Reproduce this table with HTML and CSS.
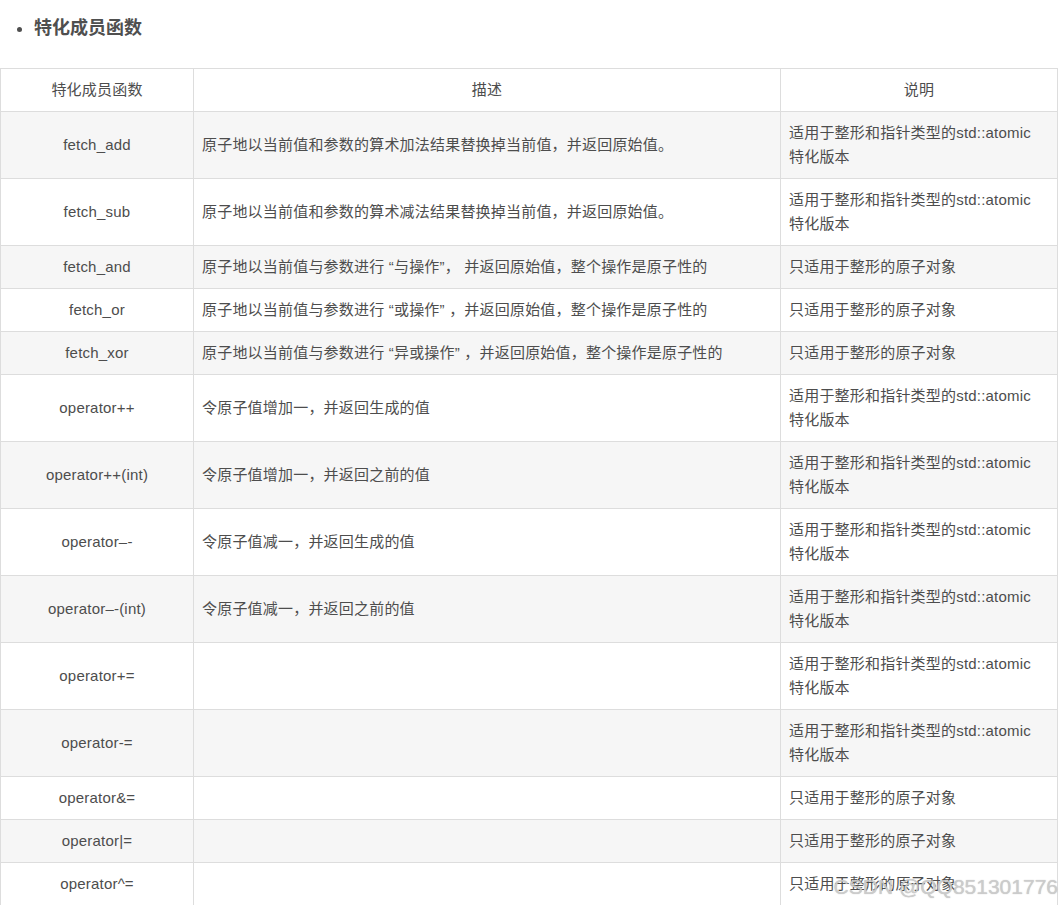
FILE: index.html
```html
<!DOCTYPE html>
<html lang="zh">
<head>
<meta charset="utf-8">
<link rel="stylesheet" href="styles.css">
</head>
<body>
<ul class="heading-list">
  <li>特化成员函数</li>
</ul>
<table class="spec-table">
  <colgroup>
    <col class="c1">
    <col class="c2">
    <col class="c3">
  </colgroup>
  <thead>
    <tr><th>特化成员函数</th><th>描述</th><th>说明</th></tr>
  </thead>
  <tbody>
    <tr><td class="name">fetch_add</td><td>原子地以当前值和参数的算术加法结果替换掉当前值，并返回原始值。</td><td class="note">适用于整形和指针类型的std::atomic特化版本</td></tr>
    <tr><td class="name">fetch_sub</td><td>原子地以当前值和参数的算术减法结果替换掉当前值，并返回原始值。</td><td class="note">适用于整形和指针类型的std::atomic特化版本</td></tr>
    <tr><td class="name">fetch_and</td><td>原子地以当前值与参数进行 “与操作”， 并返回原始值，整个操作是原子性的</td><td class="note">只适用于整形的原子对象</td></tr>
    <tr><td class="name">fetch_or</td><td>原子地以当前值与参数进行 “或操作” ，并返回原始值，整个操作是原子性的</td><td class="note">只适用于整形的原子对象</td></tr>
    <tr><td class="name">fetch_xor</td><td>原子地以当前值与参数进行 “异或操作” ，并返回原始值，整个操作是原子性的</td><td class="note">只适用于整形的原子对象</td></tr>
    <tr><td class="name">operator++</td><td>令原子值增加一，并返回生成的值</td><td class="note">适用于整形和指针类型的std::atomic特化版本</td></tr>
    <tr><td class="name">operator++(int)</td><td>令原子值增加一，并返回之前的值</td><td class="note">适用于整形和指针类型的std::atomic特化版本</td></tr>
    <tr><td class="name">operator–-</td><td>令原子值减一，并返回生成的值</td><td class="note">适用于整形和指针类型的std::atomic特化版本</td></tr>
    <tr><td class="name">operator–-(int)</td><td>令原子值减一，并返回之前的值</td><td class="note">适用于整形和指针类型的std::atomic特化版本</td></tr>
    <tr><td class="name">operator+=</td><td></td><td class="note">适用于整形和指针类型的std::atomic特化版本</td></tr>
    <tr><td class="name">operator-=</td><td></td><td class="note">适用于整形和指针类型的std::atomic特化版本</td></tr>
    <tr><td class="name">operator&amp;=</td><td></td><td class="note">只适用于整形的原子对象</td></tr>
    <tr><td class="name">operator|=</td><td></td><td class="note">只适用于整形的原子对象</td></tr>
    <tr><td class="name">operator^=</td><td></td><td class="note">只适用于整形的原子对象</td></tr>
  </tbody>
</table>
<div class="watermark">CSDN @QQ851301776</div>
</body>
</html>
```
FILE: styles.css
```css
html, body {
  margin: 0;
  padding: 0;
  background: #fff;
}
body {
  font-family: "Liberation Sans", "Noto Sans CJK SC", sans-serif;
  color: #4d4d4d;
  font-size: 15px;
  position: relative;
  width: 1060px;
  height: 905px;
  overflow: hidden;
}
.heading-list {
  margin: 0 0 28px 0;
  padding: 16px 0 0 34px;
  font-size: 18px;
  line-height: 24px;
  font-weight: bold;
  color: #4f4f4f;
}
.heading-list li {
  list-style: disc;
}
.spec-table {
  border-collapse: collapse;
  table-layout: fixed;
  width: 1057px;
}
.c1 { width: 193px; }
.c2 { width: 587px; }
.c3 { width: 277px; }
.spec-table th,
.spec-table td {
  border: 1px solid #dddddd;
  padding: 9px 8px;
  line-height: 24px;
  font-size: 15px;
  letter-spacing: 0.2px;
  font-weight: normal;
  color: #4d4d4d;
  text-align: left;
  vertical-align: middle;
}
.spec-table td.note {
  padding-right: 20px;
}
.spec-table th {
  text-align: center;
  background: #fff;
}
.spec-table td.name {
  text-align: center;
}
.spec-table tbody tr:nth-child(odd) td {
  background: #f6f6f6;
}
.spec-table tbody tr:nth-child(even) td {
  background: #fff;
}
.watermark {
  position: absolute;
  right: 2px;
  bottom: 6px;
  font-family: "Liberation Sans", sans-serif;
  font-size: 21px;
  line-height: 24px;
  color: rgba(205, 205, 205, 0.9);
  text-shadow: 0 0 1px rgba(120, 120, 120, 0.5);
  white-space: nowrap;
}
```
